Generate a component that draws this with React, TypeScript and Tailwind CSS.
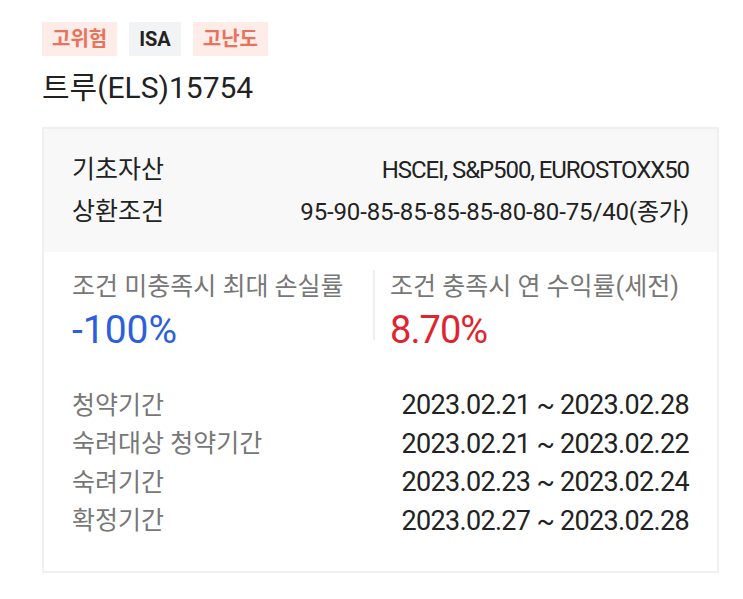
import React from 'react';

const font = { fontFamily: 'Roboto, "Noto Sans CJK KR", sans-serif' };

const periods = [
    { label: '청약기간', value: '2023.02.21 ~ 2023.02.28' },
    { label: '숙려대상 청약기간', value: '2023.02.21 ~ 2023.02.22' },
    { label: '숙려기간', value: '2023.02.23 ~ 2023.02.24' },
    { label: '확정기간', value: '2023.02.27 ~ 2023.02.28' },
];

export default function App() {
    return (
        <div className="w-[743px] h-[599px] bg-white pl-[42px] pr-[24px] pt-[22px]" style={font}>
            {/* Tags */}
            <div className="flex items-center gap-3">
                <span className="px-[10px] h-[34px] flex items-center bg-[#fdece8] text-[#e8735d] text-[20px] font-bold">고위험</span>
                <span className="px-[10px] h-[34px] flex items-center bg-[#f2f3f5] text-[#222] text-[20px] font-bold">ISA</span>
                <span className="px-[10px] h-[34px] flex items-center bg-[#fdece8] text-[#e8735d] text-[20px] font-bold">고난도</span>
            </div>

            <h1 className="mt-[12px] text-[30px] leading-[40px] text-[#222]">트루(ELS)15754</h1>

            {/* Card */}
            <div className="mt-[19px] border-2 border-[#f0f0f0]">
                <div className="bg-[#f8f8f8] px-[28px] pt-[23px] pb-[22px] flex flex-col gap-[6px] text-[#222]">
                    <div className="flex justify-between items-center h-[36px]">
                        <span className="text-[25px]">기초자산</span>
                        <span className="text-[24px] tracking-[-0.045em]">HSCEI, S&amp;P500, EUROSTOXX50</span>
                    </div>
                    <div className="flex justify-between items-center h-[36px]">
                        <span className="text-[25px]">상환조건</span>
                        <span className="text-[24px] tracking-[-0.006em]">95-90-85-85-85-85-80-80-75/40(종가)</span>
                    </div>
                </div>

                <div className="px-[28px] pt-[17px] pb-[31px]">
                    <div className="flex">
                        <div className="w-[301px] flex flex-col">
                            <span className="text-[25px] leading-[36px] text-[#777]">조건 미충족시 최대 손실률</span>
                            <span className="text-[39px] leading-[50px] text-[#2d5fdc]">-100%</span>
                        </div>
                        <div className="w-[2px] h-[70px] bg-[#eeeeee] mt-[1px]" />
                        <div className="pl-[15px] flex flex-col">
                            <span className="text-[25px] leading-[36px] text-[#777]">조건 충족시 연 수익률(세전)</span>
                            <span className="text-[38px] leading-[50px] text-[#e0242e] tracking-tight">8.70%</span>
                        </div>
                    </div>

                    <div className="mt-[31px] flex flex-col">
                        {periods.map((p) => (
                            <div key={p.label} className="flex justify-between items-center h-[38.5px]">
                                <span className="text-[25px] text-[#777]">{p.label}</span>
                                <span className="text-[27px] text-[#222] tracking-[-0.025em]">{p.value}</span>
                            </div>
                        ))}
                    </div>
                </div>
            </div>
        </div>
    );
}
